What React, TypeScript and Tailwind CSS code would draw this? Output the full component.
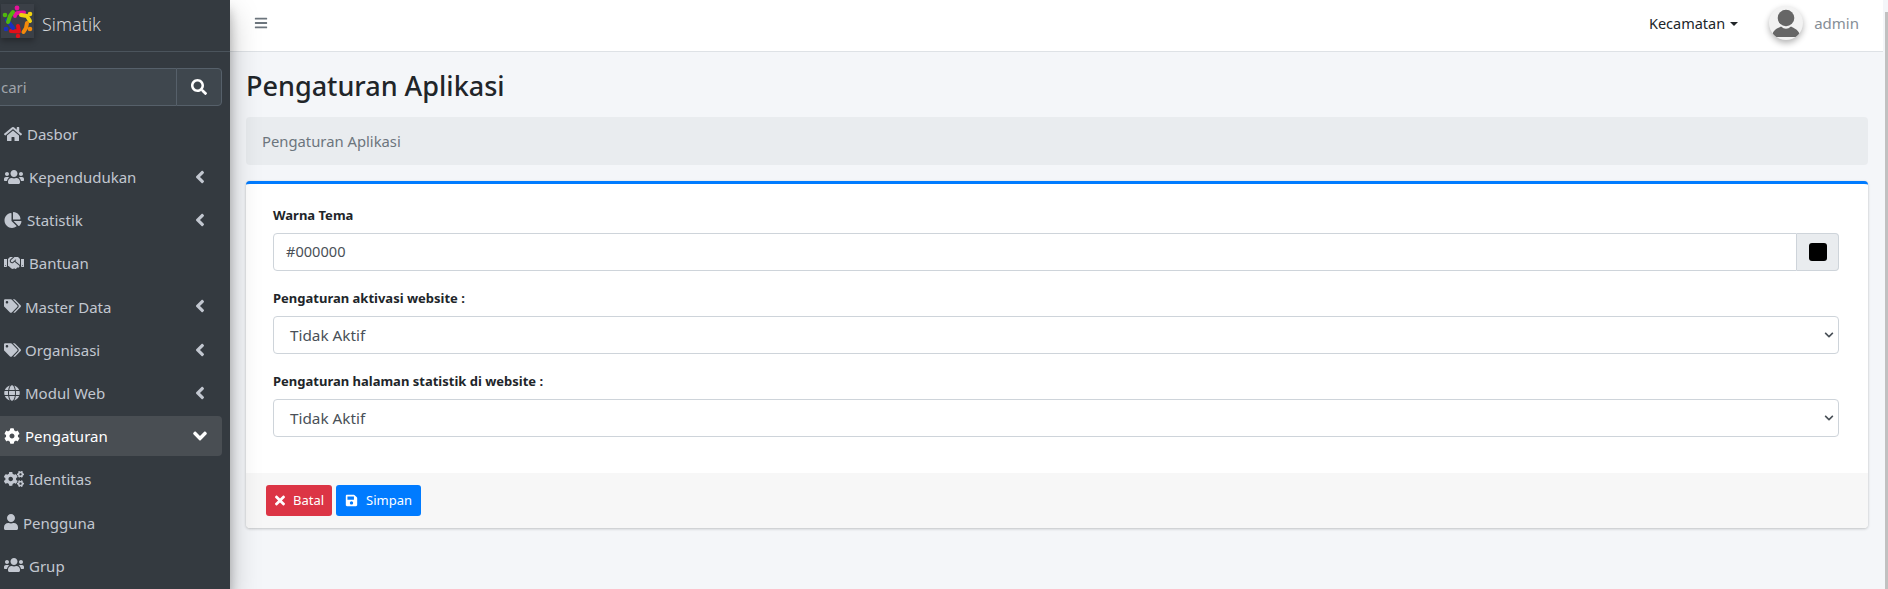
import React from "react";
import { FaHome, FaUsers, FaChartPie, FaHandshake, FaTags, FaGlobe, FaCog, FaCogs, FaUser, FaAngleLeft, FaAngleDown, FaChevronDown, FaSearch, FaBars, FaTimes, FaSave } from "react-icons/fa";

const font = "font-['Noto_Sans','Open_Sans',sans-serif]";

type Item = { icon: React.ReactNode; label: string; gap?: string; arrow?: boolean; active?: boolean };

const items: Item[] = [
  { icon: <FaHome className="w-[18px] h-[16px]" />, label: "Dasbor" },
  { icon: <FaUsers className="w-[20px] h-[16px]" />, label: "Kependudukan", arrow: true },
  { icon: <FaChartPie className="w-[18px] h-[16px]" />, label: "Statistik", arrow: true },
  { icon: <FaHandshake className="w-[20px] h-[16px]" />, label: "Bantuan" },
  { icon: <FaTags className="w-[17px] h-[14px]" />, label: "Master Data", gap: "ml-[4px]", arrow: true },
  { icon: <FaTags className="w-[17px] h-[14px]" />, label: "Organisasi", gap: "ml-[4px]", arrow: true },
  { icon: <FaGlobe className="w-[16px] h-[16px]" />, label: "Modul Web", arrow: true },
  { icon: <FaCog className="w-[16px] h-[16px]" />, label: "Pengaturan", arrow: true, active: true },
  { icon: <FaCogs className="w-[20px] h-[16px]" />, label: "Identitas" },
  { icon: <FaUser className="w-[14px] h-[16px]" />, label: "Pengguna" },
  { icon: <FaUsers className="w-[20px] h-[16px]" />, label: "Grup" },
];

function Field({ label, children }: { label: string; children: React.ReactNode }) {
  return (
    <div className="mb-[17px]">
      <div className="text-[13px] leading-[20px] font-bold text-[#212529] mb-[8px]">{label}</div>
      {children}
    </div>
  );
}

function Select() {
  return (
    <div className="h-[38px] border border-[#ced4da] rounded-[4px] bg-white flex items-center justify-between pl-[16px] pr-[4px] text-[15.3px] text-[#495057]">
      <span>Tidak Aktif</span>
      <FaChevronDown className="w-[10px] h-[10px] text-[#495057]" />
    </div>
  );
}

export default function App() {
  return (
    <div className={`${font} h-[589px] w-[1888px] overflow-hidden flex bg-[#f4f6f9]`}>
      <aside className="w-[230px] shrink-0 bg-[#343a40] text-[#c2c7d0] shadow-[0_14px_28px_rgba(0,0,0,0.25),0_10px_10px_rgba(0,0,0,0.22)] z-10 overflow-hidden">
        <div className="h-[52px] border-b border-[#4b545c] flex items-center pl-[1px]">
          <svg viewBox="0 0 33 34" className="w-[33px] h-[34px] shrink-0 mb-[10px] shadow-[0_3px_6px_rgba(0,0,0,0.3)]">
            <rect width="33" height="34" fill="#3b4047" />
            <g transform="translate(-1 -4)" fill="none" strokeWidth="4" strokeLinecap="round" strokeLinejoin="round">
              <circle cx="17" cy="8" r="2.4" fill="#e5139a" />
              <path d="M15 16 Q15 12 24 12.5" stroke="#e5139a" />
              <circle cx="30" cy="14" r="2.3" fill="#f2d30f" />
              <path d="M21 15 L27 16 L30 21" stroke="#f2d30f" />
              <circle cx="30" cy="29" r="2.3" fill="#f28a0c" />
              <path d="M27 23 L26 28 L23.5 32" stroke="#f28a0c" />
              <circle cx="18" cy="36" r="2.2" fill="#e3101a" />
              <path d="M11 31 L19 31.5 L18 26" stroke="#e3101a" />
              <circle cx="6" cy="29" r="2.3" fill="#1a2fc0" />
              <path d="M7 20 L10 24 L13 28" stroke="#1a2fc0" />
              <circle cx="5" cy="15" r="2.3" fill="#4fb80f" />
              <path d="M13 12 L10 16 L8 22" stroke="#4fb80f" />
            </g>
          </svg>
          <span className="ml-[8px] mb-[4px] text-[18px] leading-[30px] font-light text-[#d3d5d7]">Simatik</span>
        </div>
        <div className="flex h-[38px] mt-[16px] mr-[8px] ml-[-8px]">
          <div className="flex-1 bg-[#3f474e] border border-[#56606a] border-r-0 rounded-l-[4px] pl-[8px] flex items-center text-[15px] text-[#a0a5ab]">cari</div>
          <div className="w-[46px] bg-[#3f474e] border border-[#56606a] rounded-r-[4px] flex items-center justify-center text-white">
            <FaSearch className="w-[16px] h-[16px]" />
          </div>
        </div>
        <nav className="mt-[7.6px] mr-[8px]">
          {items.map((it) => (
            <div
              key={it.label}
              className={`h-[40px] mb-[3.2px] rounded-r-[4px] flex items-center pl-[4px] pr-[14px] text-[15px] ${it.active ? "bg-[#494e53] text-white" : ""}`}
            >
              {it.icon}
              <span className={`${it.gap ?? "ml-[5px]"} pt-[1px]`}>{it.label}</span>
              {it.arrow && (
                <span className="ml-auto w-[16px] flex justify-center">
                  {it.active ? (
                    <FaAngleDown className="w-[14px] h-[22px]" />
                  ) : (
                    <FaAngleLeft className="w-[10px] h-[20px]" />
                  )}
                </span>
              )}
            </div>
          ))}
        </nav>
      </aside>

      <div className="flex-1 min-w-0 flex flex-col">
        <header className="h-[52px] shrink-0 bg-white border-b border-[#dee2e6] flex items-center pl-[24px] pr-[24px]">
          <FaBars className="w-[14px] h-[14px] text-[#6c757d] mb-[6px]" />
          <div className="ml-auto flex items-center text-[16px] mb-[4px]">
            <span className="text-[#212529] text-[14.5px]">Kecamatan</span>
            <span className="ml-[5px] w-0 h-0 border-x-[4px] border-x-transparent border-t-[4.5px] border-t-[#212529]" />
            <span className="ml-[31px] mb-[2px] w-[34px] h-[34px] rounded-full bg-[#f2f2f2] shadow-[0_3px_6px_rgba(0,0,0,0.3)] overflow-hidden shrink-0">
              <svg viewBox="0 0 34 34" className="w-[34px] h-[34px]">
                <circle cx="17" cy="12" r="8.3" fill="#666" />
                <path d="M3.5 28 C5 23 10 22 12 20.5 Q17 25 22 20.5 C24 22 29 23 30.5 28 L29 31 H5 Z" fill="#666" />
              </svg>
            </span>
            <span className="ml-[11px] text-[#868e96] text-[15px]">admin</span>
          </div>
        </header>

        <main className="flex-1 pl-[16px] pr-[15px]">
          <h1 className="text-[27px] leading-[34px] font-medium text-[#212529] mt-[17px] mb-[14px]">Pengaturan Aplikasi</h1>
          <div className="h-[48px] bg-[#e9ecef] rounded-[4px] flex items-center px-[16px] text-[14.8px] text-[#6c757d]">Pengaturan Aplikasi</div>
          <section className="mt-[16px] bg-white rounded-[4px] border-t-[3px] border-[#007bff] shadow-[0_0_1px_rgba(0,0,0,0.125),0_1px_3px_rgba(0,0,0,0.2)]">
            <div className="pt-[21px] pl-[27px] pr-[29px] pb-[19px]">
              <Field label="Warna Tema">
                <div className="flex h-[38px]">
                  <div className="flex-1 border border-[#ced4da] rounded-l-[4px] flex items-center pl-[12px] text-[14.6px] text-[#495057]">#000000</div>
                  <div className="w-[42px] bg-[#e9ecef] border border-l-0 border-[#ced4da] rounded-r-[4px] flex items-center justify-center">
                    <span className="w-[18px] h-[18px] rounded-[3px] bg-black" />
                  </div>
                </div>
              </Field>
              <Field label="Pengaturan aktivasi website :">
                <Select />
              </Field>
              <Field label="Pengaturan halaman statistik di website :">
                <Select />
              </Field>
            </div>
            <div className="h-[55px] bg-[#f7f7f7] rounded-b-[4px] flex items-center pl-[20px] gap-[4px] text-[13px] text-white">
              <div className="h-[31px] w-[66px] pl-[9px] bg-[#dc3545] rounded-[3px] flex items-center">
                <FaTimes className="w-[10px] h-[15px] mr-[8px]" />Batal
              </div>
              <div className="h-[31px] w-[85px] pl-[9px] bg-[#007bff] rounded-[3px] flex items-center">
                <FaSave className="w-[13px] h-[13px] mr-[8px]" />Simpan
              </div>
            </div>
          </section>
        </main>
      </div>
      <div className="w-[5px] shrink-0 bg-[#f4f6f9] pl-[2px] pt-[12px]">
        <div className="h-full bg-[#c1c1c1]" />
      </div>
    </div>
  );
}
